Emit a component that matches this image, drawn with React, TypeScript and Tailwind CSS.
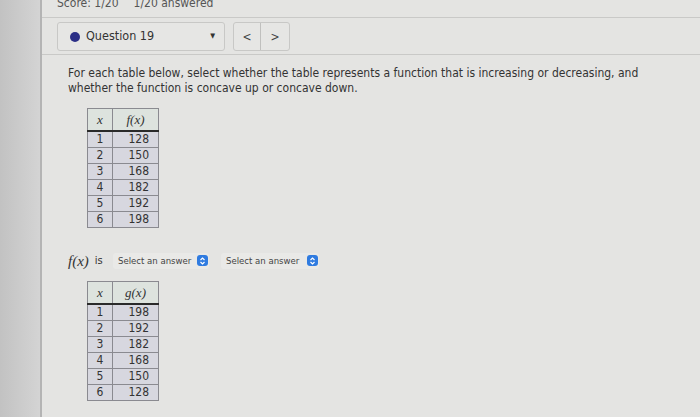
import React from 'react';

const fRows = [
    [1, 128],
    [2, 150],
    [3, 168],
    [4, 182],
    [5, 192],
    [6, 198],
];

const gRows = [
    [1, 198],
    [2, 192],
    [3, 182],
    [4, 168],
    [5, 150],
    [6, 128],
];

// 數值表格
const ValueTable: React.FC<{ name: string; rows: number[][] }> = ({ name, rows }) => (
    <table className="border-collapse border border-[#8a8a90] text-[12px] text-[#333] [font-family:'DejaVu_Sans_Condensed','Liberation_Sans',sans-serif]">
        <thead>
            <tr className="bg-[#dde3de] border-b-2 border-[#2a2a2a]">
                <th className="w-[25px] h-[22px] border-r border-[#8a8a90] font-normal italic text-[13px] [font-family:'Liberation_Serif',serif]">x</th>
                <th className="w-[46px] border-[#8a8a90] font-normal italic text-[13px] [font-family:'Liberation_Serif',serif]">
                    {name}(x)
                </th>
            </tr>
        </thead>
        <tbody>
            {rows.map(([x, y]) => (
                <tr key={x} className="bg-[#d7d7df] border-t border-[#8a8a90]">
                    <td className="h-[15px] leading-[15px] border-r border-[#8a8a90] text-center">{x}</td>
                    <td className="h-[15px] leading-[15px] text-right pr-[9px]">{y}</td>
                </tr>
            ))}
        </tbody>
    </table>
);

const SelectBox: React.FC<{ width: string }> = ({ width }) => (
    <div className={`flex items-center justify-between h-[16px] pl-[5px] pr-[1px] rounded-[3px] bg-[#e9e9e7] text-[9.5px] text-[#444] ${width}`}>
        <span>Select an answer</span>
        <span className="flex items-center justify-center w-[11px] h-[11px] rounded-[3px] bg-[#2f7be0]">
            <svg width="7" height="8" viewBox="0 0 7 8">
                <path d="M1.5 3 L3.5 1 L5.5 3 M1.5 5 L3.5 7 L5.5 5" stroke="white" strokeWidth="1.2" fill="none" />
            </svg>
        </span>
    </div>
);

export default function App() {
    return (
        <div className="w-[700px] h-[417px] overflow-hidden flex bg-[#e4e4e2] [font-family:'DejaVu_Sans_Condensed','DejaVu_Sans',sans-serif]">
            <div className="w-[42px] shrink-0 bg-gradient-to-r from-[#c2c2c2] to-[#d4d4d4] border-r-2 border-[#b4b4b4]" />
            <div className="flex-1 flex flex-col">
                <div className="h-[22px] pl-[15px] mt-[-4px] flex items-end gap-[15px] text-[12px] text-[#555] leading-none pb-[8px] border-b border-[#c9c9c7] mr-[-10px]">
                    <span>Score: 1/20</span>
                    <span>1/20 answered</span>
                </div>
                <div className="flex items-center gap-[8px] pl-[15px] pt-[4px] pb-[3px] border-b border-[#c9c9c7]">
                    <div className="w-[168px] h-[29px] flex items-center pl-[12px] pr-[9px] rounded-[3px] border border-[#c8c8c6] bg-[#e6e6e4]">
                        <span className="w-[10px] h-[10px] rounded-full bg-[#2b2f86]" />
                        <span className="ml-[6px] text-[12.5px] text-[#333]">Question 19</span>
                        <span className="ml-auto text-[7px] text-[#333]">▼</span>
                    </div>
                    <div className="flex h-[29px] rounded-[3px] border border-[#c8c8c6] bg-[#e6e6e4] text-[#444] text-[12px]">
                        <span className="w-[27px] flex items-center justify-center border-r border-[#c0c0be]">&lt;</span>
                        <span className="w-[28px] flex items-center justify-center">&gt;</span>
                    </div>
                </div>
                <div className="pl-[26px] pt-[11px] text-[12px] leading-[15px] text-[#333] w-[600px]">
                    For each table below, select whether the table represents a function that is increasing or decreasing, and
                    whether the function is concave up or concave down.
                </div>
                <div className="pl-[45px] pt-[12px]">
                    <ValueTable name="f" rows={fRows} />
                </div>
                <div className="pl-[26px] pt-[22px] flex items-center">
                    <div className="flex items-center gap-[6px] w-[45px]">
                        <span className="italic text-[15px] text-[#333] [font-family:'Liberation_Serif',serif]">f(x)</span>
                        <span className="text-[11px] text-[#333]">is</span>
                    </div>
                    <div className="flex items-center gap-[12px]">
                        <SelectBox width="w-[96px]" />
                        <SelectBox width="w-[98px]" />
                    </div>
                </div>
                <div className="pl-[45px] pt-[9px]">
                    <ValueTable name="g" rows={gRows} />
                </div>
            </div>
        </div>
    );
}
